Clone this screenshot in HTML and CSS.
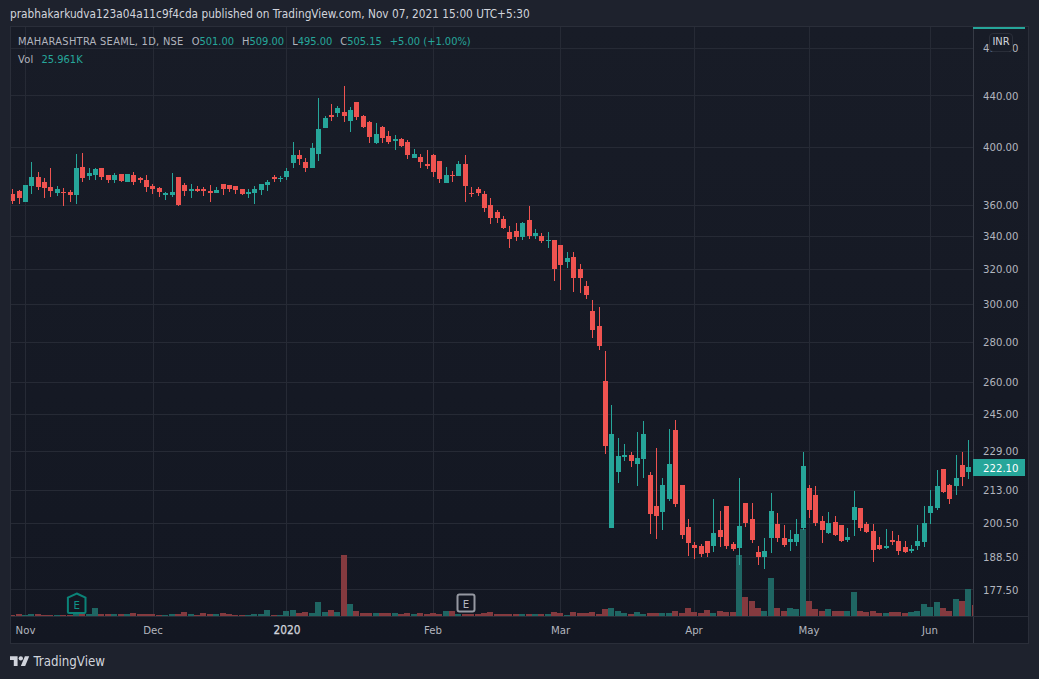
FILE: index.html
```html
<!DOCTYPE html>
<html lang="en">
<head>
<meta charset="utf-8">
<title>MAHARASHTRA SEAML chart</title>
<link rel="stylesheet" href="styles.css">
</head>
<body>
<header class="title">prabhakarkudva123a04a11c9f4cda published on TradingView.com, Nov 07, 2021 15:00 UTC+5:30</header>
<main class="panel">
  <section class="plot">
    <svg class="plot-svg" viewBox="11 27 962 589" width="962" height="589" xmlns="http://www.w3.org/2000/svg">
      <g class="grid">
        <path d="M11 48.5H973M11 95.5H973M11 147.5H973M11 205.5H973M11 236.5H973M11 269.5H973M11 304.5H973M11 342.5H973M11 382.5H973M11 414.5H973M11 451.5H973M11 490.5H973M11 523.5H973M11 557.5H973M11 589.5H973"/>
        <path d="M25.5 27V616M153.5 27V616M286.5 27V616M433.5 27V616M560.5 27V616M694.5 27V616M809.5 27V616M930.5 27V616"/>
      </g>
      <g id="volumes"></g>
      <g id="candles"></g>
      <path class="mark-green" d="M76.7 593.5L85.5 597.7V612a1 1 0 0 1-1 1H68.9a1 1 0 0 1-1-1V597.7Z"/>
      <text class="mark-text-green" x="76.7" y="609" text-anchor="middle">E</text>
      <rect class="mark-gray" x="457.5" y="594.5" width="17" height="17" rx="2"/>
      <text class="mark-text-gray" x="466" y="608" text-anchor="middle">E</text>
    </svg>
    <div class="legend">
      <div class="legend-row">
        <span class="legend-name">MAHARASHTRA SEAML, 1D, NSE</span>
        <span class="legend-ohlc">O<b>501.00</b></span>
        <span class="legend-ohlc">H<b>509.00</b></span>
        <span class="legend-ohlc">L<b>495.00</b></span>
        <span class="legend-ohlc">C<b>505.15</b></span>
        <span class="legend-ohlc"><b>+5.00 (+1.00%)</b></span>
      </div>
      <div class="legend-row">
        <span class="legend-name">Vol</span>
        <span class="legend-ohlc"><b>25.961K</b></span>
      </div>
    </div>
  </section>
  <aside class="price-axis">
    <svg viewBox="974 27 54 589" width="54" height="589" xmlns="http://www.w3.org/2000/svg">
      <rect class="top-line" x="973" y="27" width="52" height="2"/>
      <g class="axis-text">
        <text x="983" y="52">480.00</text>
        <text x="983" y="100">440.00</text>
        <text x="983" y="151">400.00</text>
        <text x="983" y="209">360.00</text>
        <text x="983" y="240">340.00</text>
        <text x="983" y="273">320.00</text>
        <text x="983" y="308">300.00</text>
        <text x="983" y="346">280.00</text>
        <text x="983" y="386">260.00</text>
        <text x="983" y="418">245.00</text>
        <text x="983" y="455">229.00</text>
        <text x="983" y="494">213.00</text>
        <text x="983" y="527">200.50</text>
        <text x="983" y="561">188.50</text>
        <text x="983" y="594">177.50</text>
      </g>
      <rect class="price-tag" x="973" y="459" width="52" height="17"/>
      <text class="price-tag-text" x="983" y="472">222.10</text>
    </svg>
    <span class="currency">INR</span>
  </aside>
  <footer class="time-axis">
    <svg viewBox="11 617 962 25" width="962" height="25" xmlns="http://www.w3.org/2000/svg">
      <g class="axis-text" text-anchor="middle">
        <text x="25.5" y="634">Nov</text>
        <text x="153" y="634">Dec</text>
        <text class="year" x="287" y="634">2020</text>
        <text x="433" y="634">Feb</text>
        <text x="560.5" y="634">Mar</text>
        <text x="694" y="634">Apr</text>
        <text x="809" y="634">May</text>
        <text x="930" y="634">Jun</text>
      </g>
    </svg>
  </footer>
  <div class="corner"></div>
</main>
<div class="brand">
  <svg class="brand-logo" viewBox="0 4 36 18" width="19.5" height="10" xmlns="http://www.w3.org/2000/svg">
    <path d="M14 22H7V11H0V4h14v18zM28 22h-8l7.5-18h8L28 22z"/>
    <circle cx="20" cy="8" r="4"/>
  </svg>
  <span class="brand-name">TradingView</span>
</div>
<script src="chart.js"></script>
</body>
</html>
```
FILE: styles.css
```css
* { box-sizing: border-box; }
html, body { height: 100%; }
body {
  margin: 0;
  background: #1e222d;
  color: #d1d4dc;
  font-family: "DejaVu Sans", "Open Sans", sans-serif;
  font-stretch: condensed;
  overflow: hidden;
}
.title {
  height: 26px;
  padding: 5px 0 0 10px;
  font-size: 11.75px;
  line-height: 18px;
  white-space: nowrap;
  color: #d1d4dc;
}
.panel {
  width: 1019px;
  height: 618px;
  margin-left: 10px;
  border: 1px solid #2a2e39;
  background: linear-gradient(#181c27, #131722);
  display: grid;
  grid-template-columns: 963px 54px;
  grid-template-rows: 589px 27px;
}
.plot { position: relative; overflow: hidden; border-right: 1px solid #363a45; }
.plot-svg { display: block; }
.grid path { stroke: #262a35; stroke-width: 1; fill: none; shape-rendering: crispEdges; }
.legend {
  position: absolute;
  left: 7px;
  top: 6px;
  font-size: 11px;
  line-height: 18px;
  color: #b2b5be;
}
.legend-row { display: flex; gap: 8px; white-space: nowrap; height: 18px; }
.legend-name { letter-spacing: 0.27px; }
.legend-ohlc b { font-weight: 400; color: #26a69a; }
.price-axis { position: relative; }
.price-axis svg { display: block; overflow: visible; }
.axis-text text { font-size: 11.3px; fill: #b2b5be; }
.axis-text .year { fill: #d1d4dc; stroke: #d1d4dc; stroke-width: 0.25px; font-size: 11.8px; }
.top-line, .price-tag { fill: #26a69a; }
.price-tag-text { font-size: 11.3px; fill: #ffffff; }
.currency {
  position: absolute;
  left: 15px;
  top: 6px;
  width: 24px;
  height: 19px;
  border: 1px solid #2a2e39;
  border-radius: 4px;
  background: #181c27;
  font-size: 11px;
  line-height: 15px;
  text-align: center;
  color: #d1d4dc;
}
.time-axis { border-top: 1px solid #2a2e39; border-right: 1px solid #363a45; }
.time-axis svg { display: block; }
.corner { border-top: 1px solid #2a2e39; }
.mark-green { fill: #131722; stroke: #0b8378; stroke-width: 2; }
.mark-text-green { font-size: 11.3px; fill: #0f9388; }
.mark-gray { fill: #131722; stroke: #9598a1; stroke-width: 2; }
.mark-text-gray { font-size: 11.3px; fill: #b2b5be; }
.brand {
  display: flex;
  align-items: center;
  gap: 4px;
  height: 36px;
  padding: 0 0 2px 10px;
}
.brand-logo { fill: #d1d4dc; display: block; }
.brand-name { font-size: 13.2px; font-weight: 400; color: #d1d4dc; }
```
FILE: chart.js
```js
// Candles as colour, wick top, body top, body bottom, wick bottom,
// measured in groups with their own y origin (units of 1/3 px).
var groups = [
  { y0: 130, d: "r178,192,213,222 r180,183,204,222 g165,165,216,216 g96,141,168,192 r126,141,171,180 r144,156,174,204 r114,171,183,201 g168,177,189,198 r174,186,188,228 r180,186,195,216 g72,114,195,222 r69,111,144,156 g114,129,138,150 g114,117,135,150 r114,114,141,150 r135,135,150,159 g129,135,150,159 r132,132,153,156 g132,132,156,156 r126,135,156,165 r141,144,150,159 r135,150,171,186 r162,168,177,192 r171,174,186,201 g186,189,194,210 g129,186,195,201 r141,141,225,228 r159,165,183,198 g162,177,183,204 r168,177,183,186 r171,177,183,198 r165,183,189,216 g171,180,189,189 r162,162,177,195 r165,165,177,186 r168,168,180,192 r177,177,192,195 g177,186,192,204 g168,177,189,222 g162,162,180,195 g150,156,165,183 r135,141,147,156 g138,144,147,156 g114,123,141,150 g36,75,99,114" },
  { y0: 80, d: "r210,225,237,255 r234,246,264,276 g189,204,264,264 g54,147,222,243 g108,114,144,144 r72,105,111,123 g78,84,99,111 r18,96,108,126 g81,90,123,156 r66,66,111,120 r105,108,141,144 r123,126,171,189 g129,162,189,192 r138,141,174,189 r153,168,186,192 g165,177,183,210 r174,177,198,201 r180,186,225,237 g207,222,234,234 r222,231,246,264 r210,252,258,267 r222,225,276,291 r243,243,297,309 g261,285,309,309 r273,285,288,306 g243,252,288,288 r225,252,318,366 r321,339,342,351 r321,327,339,348 r333,342,384,396 r354,375,414,432 r390,396,414,429 r408,417,444,447 r438,456,477,504 r429,453,471,483 g426,429,471,480 r378,420,468,477 g447,459,468,477 r459,468,483,489 g456,480,483,504" },
  { y0: 230, d: "r30,30,117,153 r45,45,105,180 g66,84,96,114 r66,81,144,186 r102,117,144,189 r153,168,195,207 r210,243,300,324 r231,288,348,360 r363,453,648,672 g525,612,894,894 g624,678,726,759 g642,675,681,693 r666,675,693,711 g606,684,702,768 g573,612,687,744 r726,735,852,912 r654,828,858,927 g744,765,846,900 g597,702,807,813 r570,600,822,831 r765,765,915,927 r867,891,939,978 r936,945,954,987 r942,948,972,981 r933,933,969,981 g807,909,948,966 r843,900,921,951 r828,828,948,957 r936,942,957,963" },
  { y0: 430, d: "g144,288,354,405 r219,219,279,291 r219,267,330,339 r348,366,381,405 g324,363,381,417 g189,243,324,369 r249,282,324,336 r285,324,345,351 g300,327,336,363 g267,312,336,348 g66,108,294,300 r165,174,240,264 r168,195,279,288 r258,273,300,339 g246,279,309,312 r258,276,315,318 r285,285,333,336 g294,321,330,336 g183,231,270,318 r234,234,294,303 r276,282,306,309 r282,303,360,396 r321,345,357,360 g297,348,354,357 r303,330,336,345 r315,333,363,375 r333,351,366,369 g345,357,363,369 g285,333,348,360 g228,279,336,351 g180,228,249,282 g120,168,234,240 r117,117,186,189 r162,165,207,222 g75,144,168,195 r66,105,141,168 g30,111,126,147" }
];
var volumes = [1,2,1,2,2,1,1,1,1,1, 2,2,2,8,2,2,2,2,2,3, 2,2,2,1,1,2,2,4,2,1, 3,2,2,3,2,1,1,1,2,2, 6,1,1,5,6, 3,4,3,14,4,6,4,61,12,5, 3,3,3,3,3,3,2,3,2,3, 2,3,2,5,5, 2,2,2,2,3,4,2,2,2,2, 2,2,2,2,2,4,3,1,4,3, 3,4,2,7,8,5,3,2,4,2, 3,3,3,3,5, 3,8,4,3,6,3,5,4,4, 61,19,15,8,5,38,8,5,8,7,87,15,7,5,7,5,5,5,24,5,4,5,3,3,4,4,3,4,5,12,9,14,8,5,17,15,27,11];

var NS = "http://www.w3.org/2000/svg";
var COLORS = { r: "#ef5350", g: "#26a69a" };
var VOL = { r: "#843a3f", g: "#1f6663" };
var candleLayer = document.getElementById("candles");
var volumeLayer = document.getElementById("volumes");

function rect(parent, x, y, w, h, fill) {
  var el = document.createElementNS(NS, "rect");
  el.setAttribute("x", x);
  el.setAttribute("y", y);
  el.setAttribute("width", w);
  el.setAttribute("height", h);
  el.setAttribute("fill", fill);
  el.setAttribute("shape-rendering", "crispEdges");
  parent.appendChild(el);
}

var colorsByIndex = [];
var index = 0;
groups.forEach(function (group) {
  group.d.split(" ").forEach(function (item) {
    var kind = item[0];
    var p = item.slice(1).split(",").map(function (n) {
      return Math.round(group.y0 + Number(n) / 3);
    });
    var cx = Math.floor(12.67 + 6.375 * index);
    rect(candleLayer, cx, p[0], 1, Math.max(p[3] - p[0], 1), COLORS[kind]);
    rect(candleLayer, cx - 2, p[1], 5, Math.max(p[2] - p[1], 1), COLORS[kind]);
    colorsByIndex.push(kind);
    index += 1;
  });
});
volumes.forEach(function (height, i) {
  var kind = colorsByIndex[i] || "r";
  var cx = Math.floor(12.67 + 6.375 * i);
  rect(volumeLayer, cx - 3, 616 - height, 6, height, VOL[kind]);
});
```
